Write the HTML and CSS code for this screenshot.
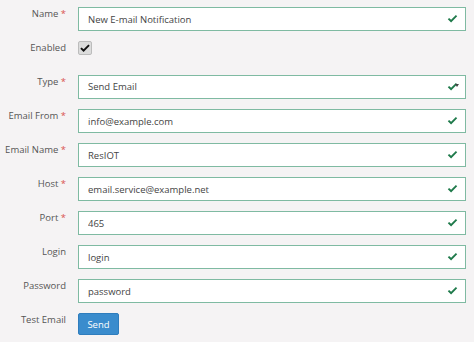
FILE: index.html
```html
<!DOCTYPE html>
<html>
<head>
  <meta charset="UTF-8">
  <title>E-mail Notification</title>
  <link rel="stylesheet" href="styles.css">
</head>
<body>
  <form class="form">
    <div class="row">
      <label class="label">Name <span class="req">*</span></label>
      <div class="field">
        <input class="input" type="text" value="New E-mail Notification">
        <svg class="ok" viewBox="0 0 10 8"><path d="M0.3 4.3 L3.6 7.4 L9.7 1.2 L8.4 0 L3.6 4.8 L1.6 2.9 Z"/></svg>
      </div>
    </div>
    <div class="row row-check">
      <label class="label">Enabled</label>
      <div class="field">
        <span class="checkbox">
          <svg viewBox="0 0 10 8"><path d="M0.3 4.3 L3.6 7.4 L9.7 1.2 L8.4 0 L3.6 4.8 L1.6 2.9 Z"/></svg>
        </span>
      </div>
    </div>
    <div class="row">
      <label class="label">Type <span class="req">*</span></label>
      <div class="field">
        <div class="input select">Send Email</div>
        <svg class="ok" viewBox="0 0 10 8"><path d="M0.3 4.3 L3.6 7.4 L9.7 1.2 L8.4 0 L3.6 4.8 L1.6 2.9 Z"/></svg>
        <span class="caret"></span>
      </div>
    </div>
    <div class="row">
      <label class="label">Email From <span class="req">*</span></label>
      <div class="field">
        <input class="input" type="text" value="info@example.com">
        <svg class="ok" viewBox="0 0 10 8"><path d="M0.3 4.3 L3.6 7.4 L9.7 1.2 L8.4 0 L3.6 4.8 L1.6 2.9 Z"/></svg>
      </div>
    </div>
    <div class="row">
      <label class="label">Email Name <span class="req">*</span></label>
      <div class="field">
        <input class="input" type="text" value="ResIOT">
        <svg class="ok" viewBox="0 0 10 8"><path d="M0.3 4.3 L3.6 7.4 L9.7 1.2 L8.4 0 L3.6 4.8 L1.6 2.9 Z"/></svg>
      </div>
    </div>
    <div class="row">
      <label class="label">Host <span class="req">*</span></label>
      <div class="field">
        <input class="input" type="text" value="email.service@example.net">
        <svg class="ok" viewBox="0 0 10 8"><path d="M0.3 4.3 L3.6 7.4 L9.7 1.2 L8.4 0 L3.6 4.8 L1.6 2.9 Z"/></svg>
      </div>
    </div>
    <div class="row">
      <label class="label">Port <span class="req">*</span></label>
      <div class="field">
        <input class="input" type="text" value="465">
        <svg class="ok" viewBox="0 0 10 8"><path d="M0.3 4.3 L3.6 7.4 L9.7 1.2 L8.4 0 L3.6 4.8 L1.6 2.9 Z"/></svg>
      </div>
    </div>
    <div class="row">
      <label class="label">Login</label>
      <div class="field">
        <input class="input" type="text" value="login">
        <svg class="ok" viewBox="0 0 10 8"><path d="M0.3 4.3 L3.6 7.4 L9.7 1.2 L8.4 0 L3.6 4.8 L1.6 2.9 Z"/></svg>
      </div>
    </div>
    <div class="row">
      <label class="label">Password</label>
      <div class="field">
        <input class="input" type="text" value="password">
        <svg class="ok" viewBox="0 0 10 8"><path d="M0.3 4.3 L3.6 7.4 L9.7 1.2 L8.4 0 L3.6 4.8 L1.6 2.9 Z"/></svg>
      </div>
    </div>
    <div class="row">
      <label class="label">Test Email</label>
      <div class="field">
        <button class="btn" type="button">Send</button>
      </div>
    </div>
  </form>
</body>
</html>
```

FILE: styles.css
```css
body {
    margin: 0;
    background-color: #f5f3f4;
    font-family: 'Open Sans', 'Noto Sans', sans-serif;
    font-size: 9.5px;
    color: #555;
}
.form {
    display: flex;
    flex-direction: column;
    gap: 10px;
    padding: 7px 8px 0 0;
}
.row {
    display: grid;
    grid-template-columns: 66px 1fr;
    column-gap: 12px;
    align-items: start;
}
.row-check {
    height: 24px;
}
.label {
    text-align: right;
    line-height: 14px;
    color: #555;
    white-space: nowrap;
}
.req {
    color: #d9534f;
}
.field {
    position: relative;
}
.input {
    display: block;
    box-sizing: border-box;
    width: 100%;
    height: 24px;
    margin: 0;
    padding: 0 26px 0 9px;
    border: 1px solid #7fbaa2;
    background: #fff;
    font-family: inherit;
    font-size: 9.5px;
    color: #444;
    outline: none;
}
.select {
    line-height: 22px;
}
.ok {
    position: absolute;
    right: 8px;
    top: 8px;
    width: 11px;
    height: 8px;
    fill: #1f7a4b;
}
.caret {
    position: absolute;
    right: 7px;
    top: 9px;
    width: 0;
    height: 0;
    border-left: 2px solid transparent;
    border-right: 2px solid transparent;
    border-top: 3px solid #444;
}
.checkbox {
    display: flex;
    align-items: center;
    justify-content: center;
    width: 14px;
    height: 14px;
    box-sizing: border-box;
    border: 1px solid #bcbcbc;
    border-radius: 2px;
    background: #dcdcdc;
}
.checkbox svg {
    width: 10px;
    height: 9px;
    fill: #111;
}
.btn {
    width: 41px;
    height: 22px;
    padding: 0;
    border: 1px solid #2f7dbd;
    border-radius: 2px;
    background-color: #3a8ccd;
    color: #fff;
    font-family: inherit;
    font-size: 9.5px;
    cursor: pointer;
}
```
